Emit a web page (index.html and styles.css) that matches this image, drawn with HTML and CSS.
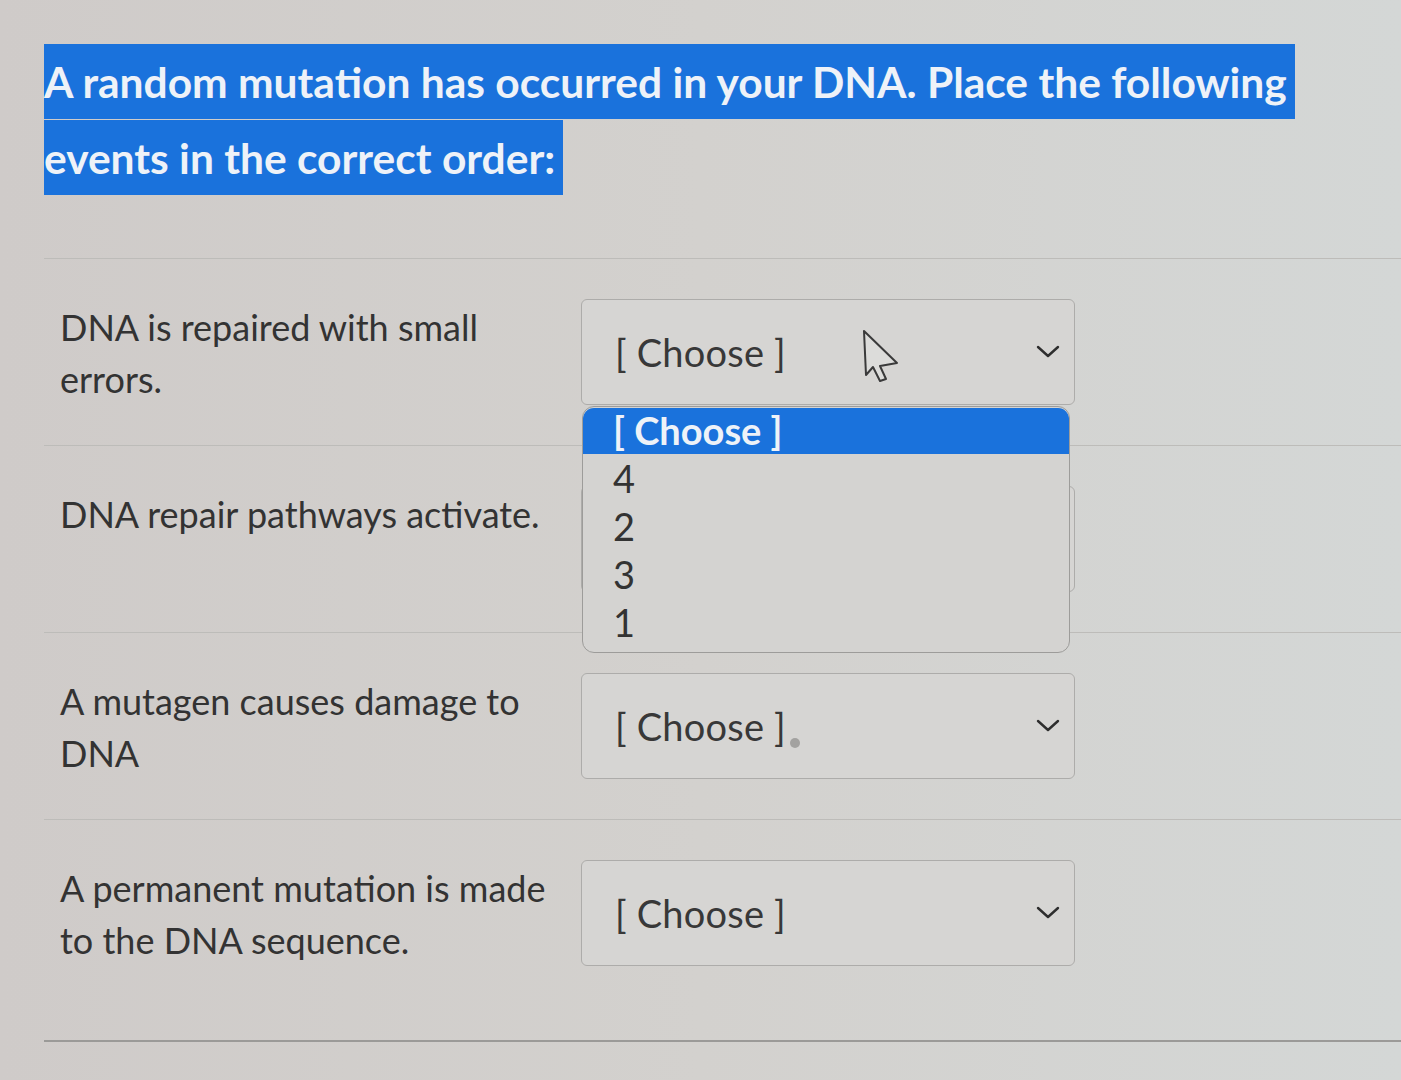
FILE: index.html
```html
<!DOCTYPE html>
<html lang="en">
<head>
<meta charset="utf-8">
<title>Quiz question</title>
<link rel="stylesheet" href="styles.css">
</head>
<body>
<div class="page">
  <div class="question">
    <p class="prompt"><span class="sel">A random mutation has occurred in your DNA. Place the following events in the correct order:</span></p>
  </div>

  <div class="rows">
    <div class="row">
      <div class="label">DNA is repaired with small errors.</div>
      <div class="select-wrap">
        <div class="select">
          <span class="value">[ Choose ]</span>
          <svg class="chev" viewBox="0 0 24 14" width="24" height="14"><path d="M2 2 L12 11 L22 2" fill="none" stroke="#2e2e2e" stroke-width="2.4" stroke-linecap="round" stroke-linejoin="round"/></svg>
        </div>
        <svg class="cursor" viewBox="0 0 40 56" width="40" height="56"><path d="M2 2 L4 46 L11 38 L18 52 L24 50 L18 37 L35 34 Z" fill="#dcdcda" stroke="#3a3a3a" stroke-width="2" stroke-linejoin="round"/></svg>
        <ul class="menu">
          <li class="opt active">[ Choose ]</li>
          <li class="opt">4</li>
          <li class="opt">2</li>
          <li class="opt">3</li>
          <li class="opt">1</li>
        </ul>
      </div>
    </div>

    <div class="row">
      <div class="label">DNA repair pathways activate.</div>
      <div class="select-wrap">
        <div class="select covered">
          <span class="value">[ Choose ]</span>
          <svg class="chev" viewBox="0 0 24 14" width="24" height="14"><path d="M2 2 L12 11 L22 2" fill="none" stroke="#2e2e2e" stroke-width="2.4" stroke-linecap="round" stroke-linejoin="round"/></svg>
        </div>
      </div>
    </div>

    <div class="row">
      <div class="label">A mutagen causes damage to DNA</div>
      <div class="select-wrap">
        <div class="select">
          <span class="value">[ Choose ]</span>
          <span class="dot"></span>
          <svg class="chev" viewBox="0 0 24 14" width="24" height="14"><path d="M2 2 L12 11 L22 2" fill="none" stroke="#2e2e2e" stroke-width="2.4" stroke-linecap="round" stroke-linejoin="round"/></svg>
        </div>
      </div>
    </div>

    <div class="row last">
      <div class="label">A permanent mutation is made to the DNA sequence.</div>
      <div class="select-wrap">
        <div class="select">
          <span class="value">[ Choose ]</span>
          <svg class="chev" viewBox="0 0 24 14" width="24" height="14"><path d="M2 2 L12 11 L22 2" fill="none" stroke="#2e2e2e" stroke-width="2.4" stroke-linecap="round" stroke-linejoin="round"/></svg>
        </div>
      </div>
    </div>
  </div>
</div>
</body>
</html>
```

FILE: styles.css
```css
html, body {
  margin: 0;
  padding: 0;
}
body {
  background: linear-gradient(90deg, #cfcbc9 0%, #d3d1ce 50%, #d4d7d6 100%);
  font-family: Lato, "Liberation Sans", sans-serif;
  color: #333;
  width: 1401px;
  height: 1080px;
  overflow: hidden;
}
.page {
  padding: 44px 0 0 44px;
}
.question {
  width: 1300px;
}
.prompt {
  margin: 0;
  font-size: 42.5px;
  line-height: 76px;
  font-weight: 700;
  color: #eef2f8;
}
.sel {
  background: #1a72dc;
  padding: 12px 8px 12px 0;
  -webkit-box-decoration-break: clone;
  box-decoration-break: clone;
}
.rows {
  margin-top: 62px;
}
.row {
  display: flex;
  align-items: flex-start;
  border-top: 1px solid #bdbcb9;
  padding: 40px 0 40px 16px;
}
.row.last {
  padding-bottom: 74px;
  border-bottom: 2px solid #9b9a98;
}
.label {
  width: 505px;
  font-size: 36px;
  line-height: 52px;
  color: #333;
  margin-top: 2px;
}
.select-wrap {
  position: relative;
  margin-left: 16px;
}
.select {
  position: relative;
  box-sizing: border-box;
  width: 494px;
  height: 106px;
  border: 1.5px solid #adacaa;
  border-radius: 6px;
  background: #d6d5d3;
  display: flex;
  align-items: center;
  justify-content: space-between;
  padding: 0 14px 0 33px;
}
.select.covered .value,
.select.covered .chev {
  visibility: hidden;
}
.value {
  font-size: 38px;
  color: #383838;
  letter-spacing: 0.2px;
}
.chev {
  display: block;
}
.dot {
  position: absolute;
  left: 208px;
  top: 64px;
  width: 10px;
  height: 10px;
  border-radius: 50%;
  background: #a3a2a0;
}
.cursor {
  position: absolute;
  left: 281px;
  top: 30px;
}
.menu {
  position: absolute;
  left: 1px;
  top: 107px;
  z-index: 5;
  margin: 0;
  padding: 1px 0 6px;
  list-style: none;
  width: 488px;
  box-sizing: border-box;
  background: #d4d3d1;
  border: 1.5px solid #9d9c9a;
  border-radius: 12px;
  overflow: hidden;
}
.opt {
  height: 48px;
  line-height: 48px;
  font-size: 38px;
  padding-left: 30px;
  color: #333;
}
.opt.active {
  height: 46px;
  line-height: 44px;
  background: #1a72dc;
  color: #eef2f8;
  font-weight: 700;
  border-radius: 11px 11px 0 0;
}
```
